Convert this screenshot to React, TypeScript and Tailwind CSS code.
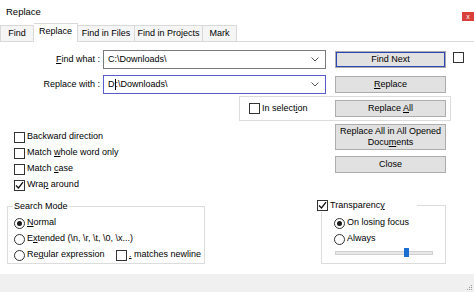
import React from "react";

function Check({ checked = false }: { checked?: boolean }) {
  return (
    <span className="inline-flex w-[11px] h-[11px] shrink-0 items-center justify-center border border-[#333] bg-white">
      {checked && (
        <svg width="9" height="9" viewBox="0 0 9 9">
          <polyline points="1,4.5 3.5,7 8,1.2" fill="none" stroke="#111" strokeWidth="1.3" />
        </svg>
      )}
    </span>
  );
}

function Radio({ on = false }: { on?: boolean }) {
  return (
    <span className="inline-flex w-[11px] h-[11px] shrink-0 items-center justify-center rounded-full border border-[#333] bg-white">
      {on && <span className="w-[5px] h-[5px] rounded-full bg-[#1a1a1a]" />}
    </span>
  );
}

function Btn({ children, cls = "" }: { children: React.ReactNode; cls?: string }) {
  return (
    <div
      className={`flex w-[111px] items-center justify-center border border-[#adadad] bg-[#e1e1e1] text-center leading-[11px] ${cls}`}
    >
      {children}
    </div>
  );
}

function Chevron() {
  return (
    <svg width="8" height="5" viewBox="0 0 8 5">
      <polyline points="0.5,0.5 4,4 7.5,0.5" fill="none" stroke="#555" strokeWidth="1" />
    </svg>
  );
}

export default function App() {
  return (
    <div className="flex flex-col w-[474px] h-[292px] bg-white overflow-hidden text-[9px] text-black font-['Liberation_Sans',Arial,sans-serif]">
      {/* title bar */}
      <div className="flex h-[23px] items-start justify-between">
        <span className="pl-[6px] leading-[23px] text-[9.5px]">Replace</span>
        <div className="mt-[12px] flex w-[12px] h-[9px] items-center justify-center bg-[#d9403a] text-white text-[7px] leading-none">
          x
        </div>
      </div>

      {/* tabs */}
      <div className="flex h-[19px] items-end border-b border-[#d9d9d9]">
        <div className="flex w-[34px] h-[16px] items-center justify-center border-l border-t border-r border-[#d9d9d9] bg-[#f5f5f5]">
          Find
        </div>
        <div className="relative z-10 -mb-px flex w-[44px] h-[19px] items-center justify-center border-l-0 border-t border-r border-[#d9d9d9] bg-white pb-[2px]">
          Replace
        </div>
        <div className="flex w-[57px] h-[16px] items-center justify-center border-t border-r border-[#d9d9d9] bg-[#f5f5f5]">
          Find in Files
        </div>
        <div className="flex w-[68px] h-[16px] items-center justify-center border-t border-r border-[#d9d9d9] bg-[#f5f5f5]">
          Find in Projects
        </div>
        <div className="flex w-[34px] h-[16px] items-center justify-center border-t border-r border-[#d9d9d9] bg-[#f5f5f5]">
          Mark
        </div>
      </div>

      {/* row: find what */}
      <div className="mt-[8px] flex h-[19px] items-center">
        <div className="w-[100px] text-right">
          <u>F</u>ind what :
        </div>
        <div className="ml-[3px] flex w-[223px] h-[19px] items-center justify-between border border-[#7a7a7a] bg-white pl-[4px] pr-[6px]">
          <span>C:\Downloads\</span>
          <Chevron />
        </div>
        <Btn cls="ml-[9px] h-[17px] border-[#2b45b5] shadow-[inset_0_0_0_1px_#2b45b5]">Find Next</Btn>
        <span className="ml-[7px]">
          <Check />
        </span>
      </div>

      {/* row: replace with */}
      <div className="mt-[6px] flex h-[19px] items-center">
        <div className="w-[100px] text-right">Replace with :</div>
        <div className="ml-[3px] flex w-[223px] h-[19px] items-center justify-between border border-[#5b5bd0] bg-white pl-[4px] pr-[6px]">
          <span className="flex items-center">
            D<span className="inline-block w-px h-[11px] bg-black" />:\Downloads\
          </span>
          <Chevron />
        </div>
        <Btn cls="ml-[9px] h-[17px]">
          <span>
            <u>R</u>eplace
          </span>
        </Btn>
      </div>

      {/* row: in selection */}
      <div className="mt-[2px] flex">
        <div className="ml-[239px] flex w-[212px] h-[25px] items-center border border-[#dcdcdc] pl-[9px]">
          <div className="flex w-[86px] items-center gap-[2px]">
            <Check />
            <span>
              In select<u>i</u>on
            </span>
          </div>
          <Btn cls="h-[17px]">
            <span>
              Replace <u>A</u>ll
            </span>
          </Btn>
        </div>
      </div>

      {/* row: options + buttons */}
      <div className="flex">
        <div className="ml-[14px] flex w-[321px] flex-col pt-[8px]">
          <div className="flex h-[16px] items-center gap-[2px]">
            <Check />
            <span>Backward direction</span>
          </div>
          <div className="flex h-[16px] items-center gap-[2px]">
            <Check />
            <span>
              Match <u>w</u>hole word only
            </span>
          </div>
          <div className="flex h-[16px] items-center gap-[2px]">
            <Check />
            <span>
              Match <u>c</u>ase
            </span>
          </div>
          <div className="flex h-[16px] items-center gap-[2px]">
            <Check checked />
            <span>
              Wra<u>p</u> around
            </span>
          </div>
        </div>
        <div className="flex flex-col pt-[3px]">
          <Btn cls="h-[26px]">
            <span>
              Replace All in All Opened
              <br />
              Docu<u>m</u>ents
            </span>
          </Btn>
          <Btn cls="mt-[6px] h-[17px]">Close</Btn>
        </div>
      </div>

      {/* row: group boxes */}
      <div className="mt-[12px] flex items-start">
        <div className="relative ml-[7px] mt-[1px] flex w-[198px] h-[58px] flex-col border border-[#dcdcdc] pl-[6px] pt-[8px]">
          <span className="absolute left-[5px] top-[-7px] bg-white px-px leading-[12px]">Search Mode</span>
          <div className="flex h-[16px] items-center gap-[2px]">
            <Radio on />
            <span>
              <u>N</u>ormal
            </span>
          </div>
          <div className="flex h-[16px] items-center gap-[2px]">
            <Radio />
            <span>
              E<u>x</u>tended (\n, \r, \t, \0, \x...)
            </span>
          </div>
          <div className="flex h-[16px] items-center">
            <div className="flex w-[102px] items-center gap-[2px]">
              <Radio />
              <span>
                Re<u>g</u>ular expression
              </span>
            </div>
            <Check />
            <span className="ml-[2px]">
              <u>.</u> matches newline
            </span>
          </div>
        </div>

        <div className="relative ml-[116px] flex w-[125px] h-[59px] flex-col border border-[#dcdcdc] pl-[12px] pt-[9px]">
          <span className="absolute left-[-5px] top-[-8px] flex w-[100px] items-center gap-[2px] bg-white leading-[14px]">
            <Check checked />
            <span>
              Transparenc<u>y</u>
            </span>
          </span>
          <div className="flex h-[16px] items-center gap-[2px]">
            <Radio on />
            <span>On losing focus</span>
          </div>
          <div className="flex h-[16px] items-center gap-[2px]">
            <Radio />
            <span>Always</span>
          </div>
          <div className="flex h-[12px] items-center">
            <div className="relative ml-[1px] w-[98px] h-[4px] border border-[#d0d0d0] bg-[#e7e7e7]">
              <span className="absolute left-[68px] top-[-4px] w-[5px] h-[9px] bg-[#1a6fd0]" />
            </div>
          </div>
        </div>
      </div>

      {/* bottom strip */}
      <div className="mt-auto flex h-[18px] items-end justify-end bg-[#f0f0f0]">
        <svg width="7" height="7" viewBox="0 0 7 7" className="mb-px mr-px">
          <rect x="5" y="1" width="1" height="1" fill="#999" />
          <rect x="3" y="3" width="1" height="1" fill="#999" />
          <rect x="5" y="3" width="1" height="1" fill="#999" />
          <rect x="1" y="5" width="1" height="1" fill="#999" />
          <rect x="3" y="5" width="1" height="1" fill="#999" />
          <rect x="5" y="5" width="1" height="1" fill="#999" />
        </svg>
      </div>
    </div>
  );
}
